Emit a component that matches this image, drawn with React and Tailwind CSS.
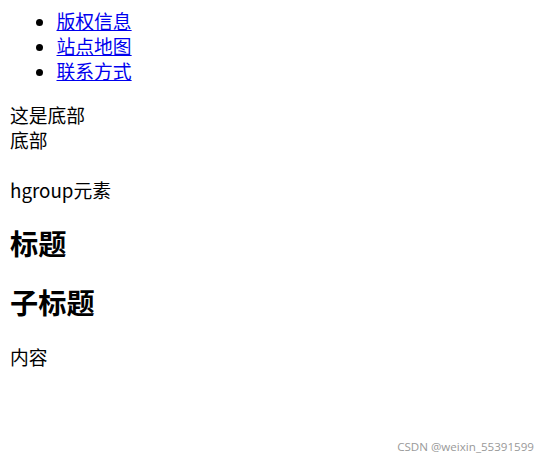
export default function App() {
  return (
    <div className="relative h-[463px] w-[549px] overflow-hidden bg-white pl-[10px] pt-[8px] font-['Noto_Sans_CJK_SC','Noto_Sans',sans-serif] text-[18.8px] leading-[25px] text-black">
      <ul className="list-disc pl-[46.5px]">
        <li><a href="#" className="text-[#0000ee] underline">版权信息</a></li>
        <li><a href="#" className="text-[#0000ee] underline">站点地图</a></li>
        <li><a href="#" className="text-[#0000ee] underline">联系方式</a></li>
      </ul>
      <p className="mt-[19.2px]">这是底部</p>
      <div>底部</div>
      <p className="mt-[25px]">hgroup元素</p>
      <h2 className="mt-[22.5px] text-[28.2px] font-bold leading-[36px]">标题</h2>
      <h2 className="mt-[23px] text-[28.2px] font-bold leading-[36px]">子标题</h2>
      <p className="mt-[24.5px]">内容</p>
      <div className="absolute bottom-[8px] right-[15px] font-['Open_Sans',sans-serif] text-[11.6px] leading-[16px] text-[#999999]">
        CSDN @weixin_55391599
      </div>
    </div>
  );
}
